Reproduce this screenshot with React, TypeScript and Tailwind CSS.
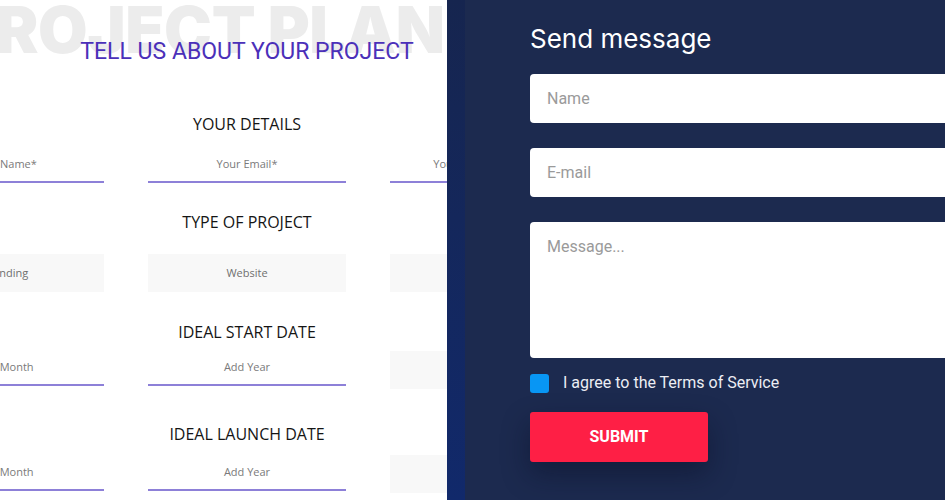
const openSans = { fontFamily: '"Open Sans", "Noto Sans", sans-serif' };

const LineInput = ({ text }: { text: string }) => (
  <div className="h-[38px] pt-[2px] border-b-2 border-[#8d80d8] flex items-center justify-center text-[11px] text-[#7a7a7a] whitespace-nowrap">
    {text}
  </div>
);

const BoxInput = ({ text }: { text?: string }) => (
  <div className="h-[38px] bg-[#f8f8f8] flex items-center justify-center text-[11px] text-[#6f6f6f]">
    {text}
  </div>
);

const Heading = ({ children, className = '' }: { children: React.ReactNode; className?: string }) => (
  <h3 className={`text-center text-[16px] leading-6 text-[#151515] ${className}`}>{children}</h3>
);

const ProjectPlanner = () => {
  return (
    <div className="relative w-[447px] h-full shrink-0 overflow-hidden bg-white" style={openSans}>
      <div className="w-[682px] ml-[-94px]">
        <div className="relative h-[80px]">
          {/* ghost title sits behind the heading */}
          <div className="absolute left-[48px] top-[-10px] font-['Inter'] font-black text-[64px] leading-[80px] tracking-[-0.005em] text-[#ececec] whitespace-nowrap">
            PROJECT PLANNER
          </div>
          <h2 className="relative pt-[38px] text-center font-['Roboto'] text-[23px] leading-7 text-[#4b30b9]">
            TELL US ABOUT YOUR PROJECT
          </h2>
        </div>

        <Heading className="mt-[32px]">YOUR DETAILS</Heading>
        <div className="grid grid-cols-3 gap-x-[44px] mt-[9px]">
          <LineInput text="Your Name*" />
          <LineInput text="Your Email*" />
          <LineInput text="Your Phone Number*" />
        </div>

        <Heading className="mt-[27px]">TYPE OF PROJECT</Heading>
        <div className="grid grid-cols-3 gap-x-[44px] mt-[20px]">
          <BoxInput text="Branding" />
          <BoxInput text="Website" />
          <BoxInput text="App" />
        </div>

        <Heading className="mt-[28px]">IDEAL START DATE</Heading>
        <div className="grid grid-cols-3 gap-x-[44px] mt-[4px] items-start">
          <LineInput text="Add Month" />
          <LineInput text="Add Year" />
          <div className="mt-[3px]">
            <BoxInput />
          </div>
        </div>

        <Heading className="mt-[33px]">IDEAL LAUNCH DATE</Heading>
        <div className="grid grid-cols-3 gap-x-[44px] mt-[7px] items-start">
          <LineInput text="Add Month" />
          <LineInput text="Add Year" />
          <div className="mt-[2px]">
            <BoxInput />
          </div>
        </div>
      </div>
    </div>
  );
};

const SendMessage = () => {
  return (
    <div className="relative flex-1 h-full overflow-hidden bg-[#1c2a4f] flex font-['Roboto']">
      <div className="w-[18px] h-full shrink-0 bg-gradient-to-b from-[#16254f] to-[#11296b]" />
      <div className="pl-[65px] w-[600px] shrink-0">
        <h2 className="mt-[23px] font-['Inter'] text-[26px] leading-8 text-white">Send message</h2>
        <div className="mt-[19px] h-[49px] rounded bg-white flex items-center pl-[17px] text-[16px] text-[#9a9a9a]">
          Name
        </div>
        <div className="mt-[25px] h-[49px] rounded bg-white flex items-center pl-[17px] text-[16px] text-[#9a9a9a]">
          E-mail
        </div>
        <div className="mt-[25px] h-[136px] rounded bg-white pl-[17px] pt-[13px] text-[16px] leading-6 text-[#9a9a9a]">
          Message...
        </div>
        <div className="mt-[15px] flex items-center gap-[14px]">
          <div className="w-[19px] h-[19px] rounded-[3px] bg-[#0896f4]" />
          <span className="text-[16px] leading-5 text-[#eceef4]">I agree to the Terms of Service</span>
        </div>
        <button className="mt-[19px] w-[178px] h-[50px] rounded-[3px] bg-[#fe1f45] text-white font-bold text-[16px] shadow-[0_12px_28px_rgba(8,14,35,0.45)]">
          SUBMIT
        </button>
      </div>
    </div>
  );
};

export default function App() {
  return (
    <div className="w-[945px] h-[500px] flex overflow-hidden">
      <ProjectPlanner />
      <SendMessage />
    </div>
  );
}
